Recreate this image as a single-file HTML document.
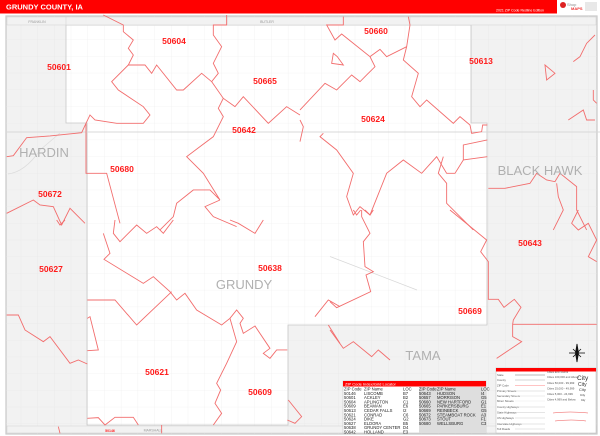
<!DOCTYPE html>
<html><head><meta charset="utf-8"><style>
html,body{margin:0;padding:0;background:#fff;width:600px;height:436px;overflow:hidden}
svg{display:block}
.z{font-family:"Liberation Sans",sans-serif;font-weight:bold;font-size:8.5px;fill:#ff1a1a;text-anchor:middle}
.c{font-family:"Liberation Sans",sans-serif;font-size:13px;fill:#b0b0b0;text-anchor:middle}
.t{font-family:"Liberation Sans",sans-serif;font-size:4.2px;fill:#222}
.r path,.r polyline,.r polygon{fill:none;stroke:#f26d6d;stroke-width:0.9;vector-effect:non-scaling-stroke}
</style></head><body>
<svg width="600" height="436" viewBox="0 0 600 436" xmlns="http://www.w3.org/2000/svg">
<defs>
<pattern id="g" width="16.7" height="16.7" patternUnits="userSpaceOnUse" x="4" y="6">
<path d="M0 0H16.7M0 0V16.7" stroke="#e6e6e6" stroke-width="0.6" fill="none"/>
</pattern>
</defs>
<!-- header -->
<rect x="0" y="0" width="557" height="13.5" fill="#ff0000"/>
<text x="6" y="9.5" font-family="Liberation Sans,sans-serif" font-weight="bold" font-size="7.5" fill="#fff">GRUNDY COUNTY, IA</text>
<text x="544" y="11.5" font-family="Liberation Sans,sans-serif" font-size="3.5" fill="#fff" text-anchor="end">2021 ZIP Code Redline Edition</text>
<circle cx="563" cy="5" r="3" fill="#d22"/>
<text x="567" y="6" font-family="Liberation Sans,sans-serif" font-size="4" fill="#888">Shop</text>
<text x="571" y="10" font-family="Liberation Sans,sans-serif" font-weight="bold" font-size="4" fill="#e33">MAPS</text>
<rect x="585" y="2" width="12" height="9" fill="#e8e8e8"/>
<!-- map frame -->
<rect x="6" y="16" width="591" height="418" fill="#f2f2f2" stroke="#c8c8c8" stroke-width="1.2"/>
<rect x="6" y="16" width="591" height="418" fill="url(#g)"/>
<!-- grundy white -->
<polygon points="66,25 471,25 471,123 487,123 487,325 288,325 288,425 87,425 87,123 66,123" fill="#fff"/>
<polygon points="66,25 471,25 471,123 487,123 487,325 288,325 288,425 87,425 87,123 66,123" fill="url(#g)" opacity="0.8"/>
<polygon points="66,25 471,25 471,123 487,123 487,325 288,325 288,425 87,425 87,123 66,123" fill="none" stroke="#c8c8c8" stroke-width="0.8"/>
<!-- top & bottom strips -->
<rect x="7" y="17" width="589" height="8" fill="#f2f2f2" stroke="#cfcfcf" stroke-width="0.5"/>
<line x1="66" y1="17" x2="66" y2="25" stroke="#cfcfcf" stroke-width="0.5"/>
<line x1="227" y1="17" x2="227" y2="25" stroke="#cfcfcf" stroke-width="0.5"/>
<line x1="410" y1="17" x2="410" y2="25" stroke="#cfcfcf" stroke-width="0.5"/>
<rect x="7" y="426" width="589" height="7" fill="#f2f2f2" stroke="#cfcfcf" stroke-width="0.5"/>
<text x="37" y="23" font-family="Liberation Sans,sans-serif" font-size="3.5" fill="#999" text-anchor="middle">FRANKLIN</text>
<text x="267" y="23" font-family="Liberation Sans,sans-serif" font-size="3.5" fill="#999" text-anchor="middle">BUTLER</text>
<text x="153" y="431.5" font-family="Liberation Sans,sans-serif" font-size="3.5" fill="#999" text-anchor="middle">MARSHALL</text>
<!-- roads -->
<path d="M7 132 H600" stroke="#d8d8d8" stroke-width="1"/>
<path d="M330 256.5 L417 290" stroke="#d8d8d8" stroke-width="0.7"/>
<path d="M8 174 Q25 172 40 150 L60 133" stroke="#dcdcdc" stroke-width="0.7" fill="none"/>
<!-- red zip lines -->
<g class="r">
<g transform="translate(0,10) scale(0.3333)">
<polyline points="310,15 370,45 370,65 400,90 385,115 400,135 385,165 435,165 455,190 470,165 530,240 550,240 605,190 635,215 655,190 640,160 665,110 640,75 640,45 680,45 680,15"/>
<polyline points="385,165 335,215 355,240 430,290 450,315 430,340 350,340 285,330 270,315 258,340 245,368 150,378 80,383 40,437 20,440"/>
<polyline points="635,215 670,265 705,290 730,260 805,340 860,290 900,315"/>
<polyline points="670,265 655,295 670,320 640,380 600,410 560,440 610,490 660,570 630,540 580,540 530,580 520,620 480,660"/>
<polyline points="660,570 615,590 640,620 710,650"/>
<polyline points="258,340 258,490 320,490 360,640"/>
<polyline points="20,610 100,570 120,585 160,590 185,645 210,595 255,640"/>
</g>
<g transform="translate(300,10) scale(0.3333)">
<polyline points="130,20 130,45 80,45 105,90 125,72 210,140 225,170 200,195 180,215 155,195 110,240 75,220 0,300"/>
<polyline points="210,140 240,118 260,140 320,110 330,45 325,20"/>
<polyline points="320,110 310,150 355,190 335,260 360,290 380,270 460,340 480,320 510,345 515,370 545,365 548,345 562,345"/>
<polygon points="100,130 112,140 130,165 95,160"/>
<polyline points="70,370 60,380 110,420 160,490 140,560 160,615 180,590 210,615 260,490 310,450 365,490 410,440 440,490 465,490 490,450 490,405 562,390"/>
<polyline points="490,450 562,440"/>
<polyline points="0,330 10,350 0,395"/>
<polyline points="430,440 415,490 440,520 440,580 520,660"/>
<polyline points="565,535 615,535 690,520 710,490 740,510 765,515 780,490 830,530 830,600 860,660"/>
<polyline points="770,520 775,560 790,600 760,660"/>
<polyline points="820,155 840,140 860,100 885,75"/>
<polyline points="805,330 850,300 860,330 885,330"/>
<polyline points="880,240 880,270 890,280"/>
<polygon points="735,165 740,210 765,190"/>
</g>
<g transform="translate(0,220) scale(0.3333)">
<polyline points="310,40 330,100 312,118 430,190 460,170 510,215 530,240 555,220 590,270 665,315 690,295 710,270 730,295 720,310 730,340 765,318 810,385 790,400 810,415 830,390 862,390"/>
<polyline points="262,240 345,240 410,315 510,220 515,215"/>
<polyline points="690,295 710,365 680,430 650,490 662,510 645,550 665,580 640,615"/>
<polyline points="262,295 270,290 295,390 262,392"/>
<polyline points="20,285 55,285 75,330 130,365 150,350 210,430 235,420 262,432"/>
<polyline points="262,595 295,593 315,615 345,592 400,592 415,615"/>
<polyline points="175,620 180,640"/><polyline points="485,615 485,640"/>
<polyline points="345,0 340,40 360,65 410,15 440,40 470,20 490,40 520,0"/>
<polyline points="690,0 715,10 765,40 790,0"/>
<polyline points="865,540 905,590 885,610 862,600"/>
<polyline points="945,290 985,240 1020,260"/>
<polyline points="985,315 1020,370"/>
<polyline points="170,0 180,15 195,0"/>
</g>
<g transform="translate(330,210) scale(0.3333)">
<polyline points="360,0 470,90 452,125 475,155 475,268 505,268 522,292 553,268 573,292 550,330 548,343 548,380 575,395 500,445"/>
<polyline points="95,0 95,20 120,70 100,95 105,170 130,185 108,195 122,245 20,293 0,275"/>
<polyline points="70,0 80,15 92,0"/><polyline points="105,0 120,15 130,0"/>
<polyline points="0,360 40,415 70,395 125,440 145,420 180,450"/>
<polyline points="548,343 800,343"/>
<polyline points="745,0 725,40 745,60 775,40 800,90 775,140 800,155"/>
</g>
</g>
<!-- county names -->
<text class="c" x="44" y="157">HARDIN</text>
<text class="c" x="540" y="175">BLACK HAWK</text>
<text class="c" x="244" y="289">GRUNDY</text>
<text class="c" x="423" y="360">TAMA</text>
<!-- zip labels -->
<text class="z" x="174" y="44">50604</text>
<text class="z" x="376" y="34">50660</text>
<text class="z" x="59" y="70">50601</text>
<text class="z" x="265" y="84">50665</text>
<text class="z" x="481" y="64">50613</text>
<text class="z" x="244" y="133">50642</text>
<text class="z" x="373" y="122">50624</text>
<text class="z" x="122" y="172">50680</text>
<text class="z" x="50" y="197">50672</text>
<text class="z" x="530" y="246">50643</text>
<text class="z" x="51" y="272">50627</text>
<text class="z" x="270" y="271">50638</text>
<text class="z" x="470" y="314">50669</text>
<text class="z" x="157" y="375">50621</text>
<text class="z" x="260" y="395">50609</text>
<text x="110" y="432" font-family="Liberation Sans,sans-serif" font-weight="bold" font-size="3.5" fill="#f22" text-anchor="middle">50146</text>
<!-- compass -->
<g transform="translate(577,353)" stroke="#111" stroke-width="0.8">
<line x1="-8" y1="0" x2="8" y2="0"/><line x1="0" y1="-9" x2="0" y2="9"/>
<line x1="-4" y1="-4" x2="4" y2="4"/><line x1="-4" y1="4" x2="4" y2="-4"/>
<polygon points="0,-9 1.5,0 0,9 -1.5,0" fill="#111"/>
</g>
<!-- index table -->
<rect x="343" y="381" width="143" height="52" fill="#fff" stroke="#bbb" stroke-width="0.5"/>
<rect x="419" y="387" width="67" height="46" fill="#dedede"/>
<rect x="343" y="381" width="143" height="5.5" fill="#ff0000"/>
<text x="345" y="385.3" font-family="Liberation Sans,sans-serif" font-size="4" fill="#fff">ZIP Code Index/Grid Locator</text>
<g class="t">
<text x="344" y="390.5">ZIP Code</text><text x="364" y="390.5">ZIP Name</text><text x="403" y="390.5">LOC</text>
<text x="419" y="390.5">ZIP Code</text><text x="437" y="390.5">ZIP Name</text><text x="481" y="390.5">LOC</text>
<text x="344" y="394.8">50146</text><text x="364" y="394.8">LISCOMB</text><text x="403" y="394.8">B7</text>
<text x="344" y="399.1">50601</text><text x="364" y="399.1">ACKLEY</text><text x="403" y="399.1">B2</text>
<text x="344" y="403.4">50604</text><text x="364" y="403.4">APLINGTON</text><text x="403" y="403.4">C1</text>
<text x="344" y="407.7">50609</text><text x="364" y="407.7">BEAMAN</text><text x="403" y="407.7">E6</text>
<text x="344" y="412">50613</text><text x="364" y="412">CEDAR FALLS</text><text x="403" y="412">I2</text>
<text x="344" y="416.3">50621</text><text x="364" y="416.3">CONRAD</text><text x="403" y="416.3">C6</text>
<text x="344" y="420.6">50624</text><text x="364" y="420.6">DIKE</text><text x="403" y="420.6">G2</text>
<text x="344" y="424.9">50627</text><text x="364" y="424.9">ELDORA</text><text x="403" y="424.9">B5</text>
<text x="344" y="429.2">50638</text><text x="364" y="429.2">GRUNDY CENTER</text><text x="403" y="429.2">D4</text>
<text x="344" y="433.3">50642</text><text x="364" y="433.3">HOLLAND</text><text x="403" y="433.3">E3</text>
<text x="419" y="394.8">50643</text><text x="437" y="394.8">HUDSON</text><text x="481" y="394.8">I4</text>
<text x="419" y="399.1">50657</text><text x="437" y="399.1">MORRISON</text><text x="481" y="399.1">G5</text>
<text x="419" y="403.4">50660</text><text x="437" y="403.4">NEW HARTFORD</text><text x="481" y="403.4">G1</text>
<text x="419" y="407.7">50665</text><text x="437" y="407.7">PARKERSBURG</text><text x="481" y="407.7">E1</text>
<text x="419" y="412">50669</text><text x="437" y="412">REINBECK</text><text x="481" y="412">G5</text>
<text x="419" y="416.3">50672</text><text x="437" y="416.3">STEAMBOAT ROCK</text><text x="481" y="416.3">A3</text>
<text x="419" y="420.6">50673</text><text x="437" y="420.6">STOUT</text><text x="481" y="420.6">F1</text>
<text x="419" y="424.9">50680</text><text x="437" y="424.9">WELLSBURG</text><text x="481" y="424.9">C3</text>
</g>
<!-- legend -->
<rect x="496" y="368" width="100" height="65" fill="#fff" stroke="#bbb" stroke-width="0.5"/>
<rect x="496" y="368" width="100" height="3.5" fill="#ff0000"/>
<g font-family="Liberation Sans,sans-serif" font-size="2.8" fill="#555">
<text x="497" y="376">State</text><text x="497" y="381">County</text><text x="497" y="386.5">ZIP Code</text>
<text x="497" y="392">Primary Streets</text><text x="497" y="397">Secondary Streets</text><text x="497" y="402">Minor Streets</text>
<text x="497" y="408">County Highways</text><text x="497" y="413.5">State Highways</text><text x="497" y="419">US Highways</text>
<text x="497" y="425">Interstate Highways</text><text x="497" y="430">Toll Roads</text>
<text x="547" y="373">Cities and Towns</text><text x="547" y="378">Cities 100,000 and Above</text>
<text x="547" y="384">Cities 50,000 - 99,999</text><text x="547" y="389.5">Cities 25,000 - 49,999</text>
<text x="547" y="395">Cities 5,000 - 24,999</text><text x="547" y="400.5">Cities 4,999 and Below</text>
</g>
<g stroke-width="0.6">
<line x1="515" y1="375" x2="545" y2="375" stroke="#777"/><line x1="515" y1="380" x2="545" y2="380" stroke="#aaa"/>
<line x1="515" y1="385.5" x2="545" y2="385.5" stroke="#f88"/><line x1="515" y1="391" x2="545" y2="391" stroke="#ccc"/>
<line x1="515" y1="396" x2="545" y2="396" stroke="#ddd"/><line x1="515" y1="401" x2="545" y2="401" stroke="#eee"/>
<line x1="515" y1="407" x2="545" y2="407" stroke="#ccc"/><line x1="515" y1="412.5" x2="545" y2="412.5" stroke="#ccc"/>
<line x1="515" y1="418" x2="545" y2="418" stroke="#ccc"/><line x1="515" y1="424" x2="545" y2="424" stroke="#ccc"/>
<line x1="515" y1="429" x2="545" y2="429" stroke="#ccc"/>
<path d="M553 413 Q570 411 588 413 M555 421 Q572 419 586 421" stroke="#e55" fill="none"/>
</g>
<g font-family="Liberation Sans,sans-serif" fill="#333">
<text x="577" y="380" font-size="6.5">City</text><text x="578" y="386" font-size="5">City</text>
<text x="579" y="391" font-size="4">City</text><text x="580" y="396" font-size="3">City</text><text x="581" y="401" font-size="2.5">City</text>
</g>
</svg>
</body></html>
